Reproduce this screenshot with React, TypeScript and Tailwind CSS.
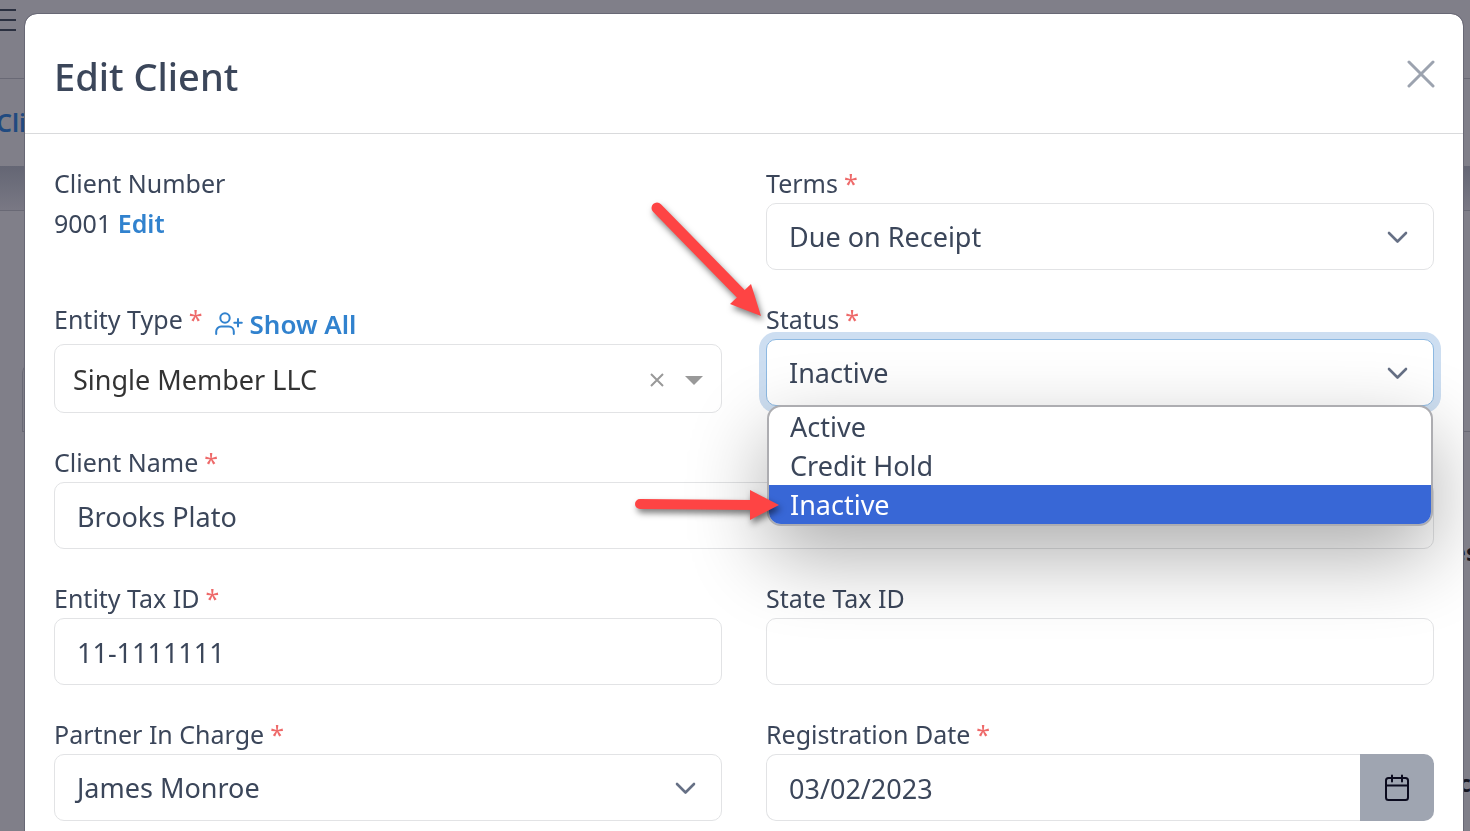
import { useState, type ReactNode } from "react"

const inputStyle = "w-full h-[67px] rounded-[10px] border border-[#e2e3e5] bg-white px-[22px] pt-[2px] text-[27px] text-[#3b465a] outline-none"
const selectStyle = "w-full h-[67px] appearance-none rounded-[10px] border bg-white px-[14px] pt-[2px] indent-[8px] text-[27px] text-[#3b465a] outline-none"

const statusOptions = ["Active", "Credit Hold", "Inactive"]

const Star = () => <span className="ml-1.5 text-[#ee6a6a]">*</span>

type FieldProps = {
    id: string
    label: string
    required?: boolean
    extra?: ReactNode
    className?: string
    children: ReactNode
}

const Field = ({ id, label, required, extra, className = "", children }: FieldProps) => {
    return (
        <div className={className}>
            <div className="flex items-start">
                <label htmlFor={id} className="leading-[39px]">
                    {label}
                    {required && <Star />}
                </label>
                {extra}
            </div>
            {children}
        </div>
    )
}

const Chevron = () => (
    <svg className="pointer-events-none absolute right-[26px] top-[28px]" width="21" height="13" viewBox="0 0 21 13" fill="none" stroke="#667085" strokeWidth="2.6" strokeLinecap="round" strokeLinejoin="round">
        <path d="M2 2l8.500 8.500L19 2" />
    </svg>
)

const UserPlusIcon = () => (
    <svg width="28" height="24" viewBox="0 0 28 24" fill="none" stroke="currentColor" strokeWidth="2" strokeLinecap="round" strokeLinejoin="round">
        <circle cx="10" cy="6" r="4.700" />
        <path d="M1.200 22v-2.500a5 5 0 0 1 5-5h7.600a5 5 0 0 1 5 5V22" />
        <path d="M23 7v7.500M19.300 10.800h7.500" />
    </svg>
)

const CalendarIcon = () => (
    <svg width="26" height="28" viewBox="0 0 26 28" fill="none" stroke="#0b0b1e" strokeWidth="2" strokeLinecap="round">
        <rect x="2" y="4" width="22" height="22" rx="2.500" />
        <path d="M2 11.500h22M8 1.500v6M18 1.500v6" />
    </svg>
)

const Background = () => {
    return (
        <div className="h-full overflow-hidden bg-[#807f89]">
            <div className="flex h-[79px] items-start border-b border-[#696975] pt-2">
                <button aria-label="Menu" className="-ml-2">
                    <svg width="24" height="24" viewBox="0 0 24 24" stroke="#2b3040" strokeWidth="2">
                        <path d="M0 2h24M0 12h24M0 22h24" />
                    </svg>
                </button>
            </div>
            <div className="flex h-[87px] items-center">
                <a href="#" className="-ml-1 text-[25px] font-semibold text-[#204a80]">Clie</a>
            </div>
            <div className="h-[45px] border-b border-[#696975] bg-linear-to-b from-[#646674] to-[#797884]"></div>
            <div className="mt-[152px] ml-[22px] h-[69px] rounded-tl-[10px] border-l border-b border-t border-[#696975] border-t-[#807f89]"></div>
            <div className="-mr-2 pt-[100px] text-right text-[24px] font-bold leading-[40px] text-[#15151f]">
                <p>es</p>
                <p className="mt-[191px]">cl</p>
            </div>
        </div>
    )
}

const StatusArrow = () => (
    <svg className="pointer-events-none absolute -left-[120px] -top-[102px] z-20 drop-shadow-[2px_4px_3px_rgba(0,0,0,0.5)]" width="120" height="124" viewBox="0 0 120 124">
        <path d="M11 10L96 97" stroke="#fe4444" strokeWidth="11" strokeLinecap="round" />
        <path d="M115 118L105 86L84 106Z" fill="#fe4444" />
    </svg>
)

const OptionArrow = () => (
    <svg className="pointer-events-none absolute -left-[135px] bottom-0.5 z-20 drop-shadow-[2px_4px_3px_rgba(0,0,0,0.5)]" width="150" height="40" viewBox="0 0 150 40">
        <path d="M8 20L120 21" stroke="#fe4444" strokeWidth="10" strokeLinecap="round" />
        <path d="M147 21L118 6V36Z" fill="#fe4444" />
    </svg>
)

const App = () => {
    const [status, setStatus] = useState("Inactive")

    return (
        <div className="h-screen overflow-hidden font-['Noto_Sans',sans-serif]">
            <Background />

            <div className="fixed inset-0 overflow-hidden pl-6 pr-[6px] pt-[13px]">
                <div role="dialog" aria-labelledby="title" className="overflow-hidden rounded-[13px] border border-[#686875] bg-white bg-clip-padding text-[25px] text-[#3b465a]">
                    <div className="flex h-[120px] items-center justify-between border-b border-[#d9dadc] pl-[29px] pr-7">
                        <h1 id="title" className="pt-1 text-[38px] font-medium leading-[48px]">Edit Client</h1>
                        <button aria-label="Close">
                            <svg width="28" height="28" viewBox="0 0 28 28" stroke="#9ca3af" strokeWidth="3" strokeLinecap="round">
                                <path d="M2 2l24 24M26 2L2 26" />
                            </svg>
                        </button>
                    </div>

                    <form className="grid grid-cols-2 gap-x-11 gap-y-[30px] px-[29px] py-[30px]">
                        <div>
                            <p className="leading-[39px]">Client Number</p>
                            <p className="leading-[41px]">
                                9001 <a href="#" className="font-semibold text-[#3182ce]">Edit</a>
                            </p>
                        </div>

                        <Field id="terms" label="Terms" required>
                            <div className="relative">
                                <select id="terms" className={`${selectStyle} border-[#e2e3e5]`}>
                                    <option>Due on Receipt</option>
                                </select>
                                <Chevron />
                            </div>
                        </Field>

                        <Field
                            id="entityType"
                            label="Entity Type"
                            required
                            extra={
                                <a href="#" className="ml-3 flex items-center gap-[7px] pt-1 text-[26px] font-semibold leading-[40px] text-[#3182ce]">
                                    <UserPlusIcon />
                                    Show All
                                </a>
                            }
                        >
                            <div className="flex h-[69px] items-center rounded-[10px] border border-[#e2e3e5] px-[18px] pt-[3px]">
                                <input id="entityType" defaultValue="Single Member LLC" className="min-w-0 flex-1 text-[27px] text-[#333333] outline-none" />
                                <button type="button" aria-label="Clear">
                                    <svg width="14" height="14" viewBox="0 0 14 14" stroke="#999999" strokeWidth="2">
                                        <path d="M1 1l12 12M13 1L1 13" />
                                    </svg>
                                </button>
                                <button type="button" aria-label="Open" className="ml-[21px]">
                                    <svg width="18" height="9" viewBox="0 0 18 9" fill="#999999">
                                        <path d="M0 0h18L9 9z" />
                                    </svg>
                                </button>
                            </div>
                        </Field>

                        <Field id="status" label="Status" required className="relative">
                            <div className="relative">
                                <select
                                    id="status"
                                    value={status}
                                    onChange={(e) => setStatus(e.target.value)}
                                    className={`${selectStyle} border-[#8db9e2] ring-7 ring-[#cddef1]`}
                                >
                                    {statusOptions.map((o) => <option key={o}>{o}</option>)}
                                </select>
                                <Chevron />
                                <div className="absolute left-px right-px top-[66px] z-10">
                                    <ul role="listbox" aria-label="Status" className="overflow-hidden rounded-[14px] border-2 border-[#adadb1] bg-white text-[27px] leading-[39px] shadow-[0_30px_80px_rgba(0,0,0,0.32)]">
                                        {statusOptions.map((o) => (
                                            <li
                                                key={o}
                                                role="option"
                                                aria-selected={o === status}
                                                onClick={() => setStatus(o)}
                                                className={o === status ? "bg-[#3867d6] px-[21px] text-white" : "px-[21px]"}
                                            >
                                                {o}
                                            </li>
                                        ))}
                                    </ul>
                                    <OptionArrow />
                                </div>
                            </div>
                            <StatusArrow />
                        </Field>

                        <Field id="clientName" label="Client Name" required className="col-span-2">
                            <input id="clientName" defaultValue="Brooks Plato" className={inputStyle} />
                        </Field>

                        <Field id="entityTaxId" label="Entity Tax ID" required>
                            <input id="entityTaxId" defaultValue="11-1111111" className={inputStyle} />
                        </Field>

                        <Field id="stateTaxId" label="State Tax ID">
                            <input id="stateTaxId" className={inputStyle} />
                        </Field>

                        <Field id="partner" label="Partner In Charge" required>
                            <div className="relative">
                                <select id="partner" className={`${selectStyle} border-[#e2e3e5]`}>
                                    <option>James Monroe</option>
                                </select>
                                <Chevron />
                            </div>
                        </Field>

                        <Field id="regDate" label="Registration Date" required>
                            <div className="flex">
                                <input id="regDate" defaultValue="03/02/2023" className="h-[67px] min-w-0 flex-1 rounded-l-[10px] border border-r-0 border-[#e2e3e5] px-[22px] pt-[2px] text-[27px] outline-none" />
                                <button type="button" aria-label="Pick a date" className="flex w-[74px] items-center justify-center rounded-r-[10px] bg-[#9fa5b1]">
                                    <CalendarIcon />
                                </button>
                            </div>
                        </Field>
                    </form>
                </div>
            </div>
        </div>
    )
}

export default App
